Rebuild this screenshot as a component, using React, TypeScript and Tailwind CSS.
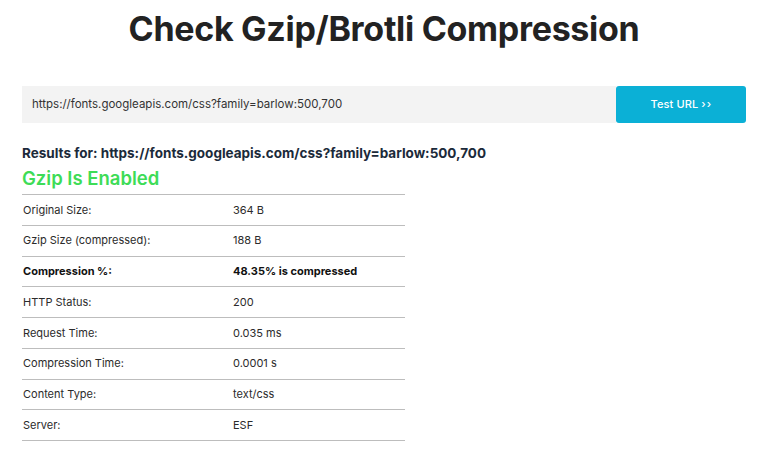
const rows = [
  { label: "Original Size:", value: "364 B" },
  { label: "Gzip Size (compressed):", value: "188 B" },
  { label: "Compression %:", value: "48.35% is compressed", bold: true },
  { label: "HTTP Status:", value: "200" },
  { label: "Request Time:", value: "0.035 ms" },
  { label: "Compression Time:", value: "0.0001 s" },
  { label: "Content Type:", value: "text/css" },
  { label: "Server:", value: "ESF" },
];

const App = () => {
  const url = "https://fonts.googleapis.com/css?family=barlow:500,700";

  return (
    <div className="w-[768px] h-[458px] bg-white overflow-hidden font-['Inter',sans-serif]">
      {/* Title */}
      <h1 className="pt-[8px] text-center text-[34px] leading-[42px] font-bold tracking-[-0.3px] text-[#222222]">
        Check Gzip/Brotli Compression
      </h1>

      {/* URL form */}
      <div className="mt-[36px] mx-[22px] flex h-[37px]">
        <div className="flex-1 flex items-center bg-[#f3f3f3] pl-[10px] text-[11.5px] text-[#333333]">
          {url}
        </div>
        <button className="w-[130px] rounded-[3px] bg-[#0bb0d6] text-white text-[11px] font-medium tracking-[0.1px]">
          Test URL ›&#8202;›
        </button>
      </div>

      {/* Results */}
      <div className="mt-[21px] ml-[22px] w-[383px]">
        <div className="text-[13.5px] leading-[19px] font-bold text-[#1b2a3a] whitespace-nowrap">
          Results for: {url}
        </div>
        <div className="mt-[1px] text-[18.5px] leading-[28px] font-semibold text-[#3ddc57]">Gzip Is Enabled</div>

        <div className="mt-[2px] border-t border-[#bdbdbd]">
          {rows.map((r) => (
            <div
              key={r.label}
              className={`flex items-center h-[30.75px] border-b border-[#bdbdbd] text-[11px] text-[#2b2b2b] ${
                r.bold ? "font-bold text-[#111111]" : ""
              }`}
            >
              <div className="w-[211px] pl-[1px]">{r.label}</div>
              <div>{r.value}</div>
            </div>
          ))}
        </div>
      </div>
    </div>
  );
};

export default App;
